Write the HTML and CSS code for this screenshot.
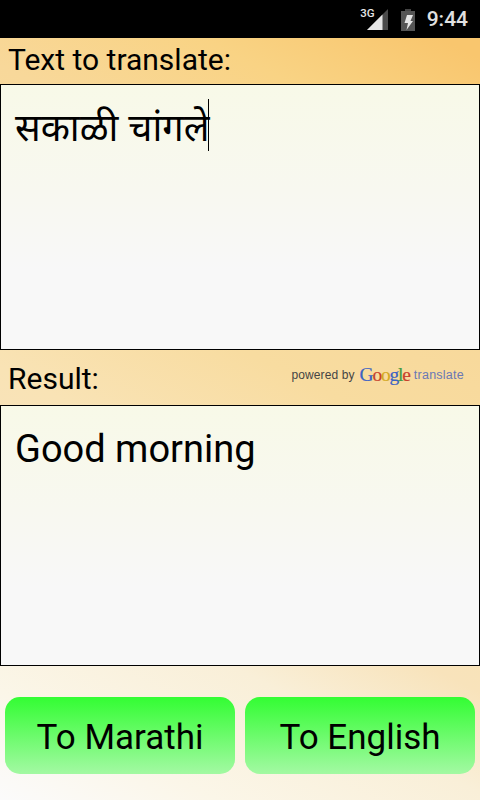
FILE: index.html
```html
<!DOCTYPE html>
<html lang="en">
<head>
    <meta charset="UTF-8">
    <meta name="viewport" content="width=device-width, initial-scale=1.0">
    <title>Marathi Translator</title>
    <link rel="stylesheet" href="styles.css">
</head>
<body>
    <!-- Status bar -->
    <div class="status-bar">
        <span class="net-type">3G</span>
        <svg class="signal" width="22" height="21" viewBox="0 0 22 21">
            <polygon points="21,0 21,21 0,21" fill="#4a4a4a"/>
            <polygon points="15.5,5.5 15.5,21 0,21" fill="#e6e6e6"/>
        </svg>
        <svg class="battery" width="14" height="22" viewBox="0 0 14 22">
            <rect x="4" y="0" width="6" height="2" fill="#444"/>
            <rect x="0" y="2" width="14" height="20" fill="#555"/>
            <polygon points="6,6 12,6 9.5,12 12,12 5.5,21 7,14 3.5,14" fill="#e6e6e6"/>
        </svg>
        <span class="clock">9:44</span>
    </div>

    <div class="app">
        <div class="label-row top-label">
            <span>Text to translate:</span>
        </div>
        <div class="text-box input-box">
            <span class="marathi">सकाळी चांगले</span><span class="cursor"></span>
        </div>

        <div class="label-row result-label">
            <span>Result:</span>
            <div class="powered">
                <span class="powered-by">powered by</span>
                <span class="google"><span class="g-blue">G</span><span class="g-red">o</span><span class="g-yellow">o</span><span class="g-blue">g</span><span class="g-green">l</span><span class="g-red">e</span></span>
                <span class="translate-word">translate</span>
            </div>
        </div>
        <div class="text-box output-box">Good morning</div>

        <div class="buttons">
            <button type="button">To Marathi</button>
            <button type="button">To English</button>
        </div>
    </div>
</body>
</html>
```

FILE: styles.css
```css
html, body {
    margin: 0;
    padding: 0;
}
body {
    width: 480px;
    height: 800px;
    overflow: hidden;
    font-family: Roboto, Arial, sans-serif;
    color: #000;
}
.status-bar {
    height: 38px;
    background-color: #000;
    display: flex;
    align-items: center;
    justify-content: flex-end;
    padding-right: 12px;
    box-sizing: border-box;
    color: #e6e6e6;
}
.net-type {
    font-size: 11.5px;
    font-weight: 500;
    margin-right: -8px;
    margin-bottom: 13px;
    z-index: 1;
}
.signal {
    margin-top: 1px;
    margin-right: 12px;
}
.battery {
    margin-top: 1px;
    margin-right: 12px;
}
.clock {
    font-size: 21px;
    font-weight: 500;
    color: #e0e0e0;
}
.app {
    height: 762px;
    background: linear-gradient(207deg, #f9c66e 2%, #f9d384 14%, #f8d89a 27%, #f8dca0 43%, #f9e3b5 57%, #f8e3bb 65%, #f9efd8 75%, #fbf6e8 89%, #fbfbfb 100%);
    display: flex;
    flex-direction: column;
}
.label-row {
    display: flex;
    align-items: center;
    justify-content: space-between;
    font-size: 30px;
    box-sizing: border-box;
}
.top-label {
    height: 46px;
    padding: 0 0 3px 8px;
}
.result-label {
    height: 55px;
    padding: 2px 16px 0 8px;
}
.text-box {
    border: 1px solid #000;
    background: linear-gradient(to bottom, #f8f9e8 0%, #f8f8f0 40%, #f8f8f8 70%);
    box-sizing: border-box;
    font-size: 38px;
    padding: 21px 14px 0;
    line-height: 44px;
}
.input-box {
    height: 266px;
    padding-top: 19px;
    display: flex;
    align-items: flex-start;
}
.output-box {
    height: 261px;
}
.marathi {
    font-family: "Noto Sans", "DejaVu Sans", sans-serif;
}
.cursor {
    width: 1px;
    height: 52px;
    background-color: #000;
    margin: -5px 0 0 -1px;
}
.powered {
    display: flex;
    align-items: center;
    margin-top: -8px;
}
.powered-by {
    font-family: "Liberation Sans", Arial, sans-serif;
    font-size: 12px;
    letter-spacing: 0.1px;
    margin-right: 5px;
    color: #444;
}
.google {
    font-family: "Liberation Serif", serif;
    font-size: 19.5px;
    letter-spacing: -1.2px;
    margin-right: 4px;
    -webkit-text-stroke: 0.2px;
}
.translate-word {
    font-family: "Liberation Sans", Arial, sans-serif;
    font-size: 12.5px;
    letter-spacing: 0.25px;
    color: #6a78b5;
}
.g-blue { color: #3c62c4; }
.g-red { color: #c8402c; }
.g-yellow { color: #d4a91f; }
.g-green { color: #3f9a45; }
.buttons {
    display: flex;
    gap: 10px;
    padding: 31px 5px 0;
}
button {
    flex: 1;
    height: 77px;
    border: none;
    border-radius: 15px;
    background: linear-gradient(to bottom, #33fd33, #a3f9a3);
    font-family: Roboto, Arial, sans-serif;
    font-size: 35px;
    color: #000;
    padding: 3px 0 0;
}
```
